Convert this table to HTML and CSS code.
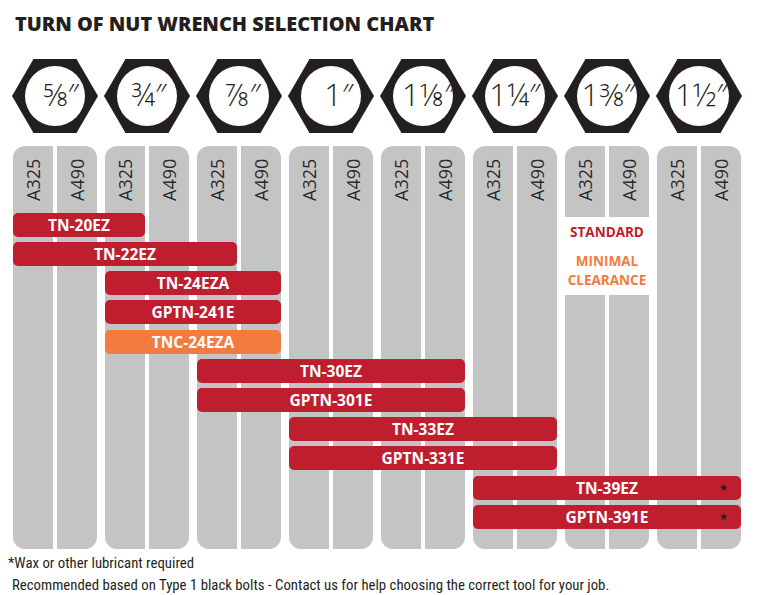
FILE: index.html
```html
<!DOCTYPE html>
<html lang="en">
<head>
<meta charset="utf-8">
<title>Turn of Nut Wrench Selection Chart</title>
<link rel="stylesheet" href="styles.css">
</head>
<body>
<h1 class="title">TURN OF NUT WRENCH SELECTION CHART</h1>

<div class="hexes">
  <div class="hex hx1"><svg class="nut" viewBox="0 0 86 74" width="86" height="74"><polygon points="0,37 21.5,0 64.5,0 86,37 64.5,74 21.5,74"/><circle cx="43" cy="37" r="30"/></svg><span class="size">⅝″</span></div>
  <div class="hex hx2"><svg class="nut" viewBox="0 0 86 74" width="86" height="74"><polygon points="0,37 21.5,0 64.5,0 86,37 64.5,74 21.5,74"/><circle cx="43" cy="37" r="30"/></svg><span class="size">¾″</span></div>
  <div class="hex hx3"><svg class="nut" viewBox="0 0 86 74" width="86" height="74"><polygon points="0,37 21.5,0 64.5,0 86,37 64.5,74 21.5,74"/><circle cx="43" cy="37" r="30"/></svg><span class="size">⅞″</span></div>
  <div class="hex hx4"><svg class="nut" viewBox="0 0 86 74" width="86" height="74"><polygon points="0,37 21.5,0 64.5,0 86,37 64.5,74 21.5,74"/><circle cx="43" cy="37" r="30"/></svg><span class="size">1″</span></div>
  <div class="hex hx5"><svg class="nut" viewBox="0 0 86 74" width="86" height="74"><polygon points="0,37 21.5,0 64.5,0 86,37 64.5,74 21.5,74"/><circle cx="43" cy="37" r="30"/></svg><span class="size">1⅛″</span></div>
  <div class="hex hx6"><svg class="nut" viewBox="0 0 86 74" width="86" height="74"><polygon points="0,37 21.5,0 64.5,0 86,37 64.5,74 21.5,74"/><circle cx="43" cy="37" r="30"/></svg><span class="size">1¼″</span></div>
  <div class="hex hx7"><svg class="nut" viewBox="0 0 86 74" width="86" height="74"><polygon points="0,37 21.5,0 64.5,0 86,37 64.5,74 21.5,74"/><circle cx="43" cy="37" r="30"/></svg><span class="size">1⅜″</span></div>
  <div class="hex hx8"><svg class="nut" viewBox="0 0 86 74" width="86" height="74"><polygon points="0,37 21.5,0 64.5,0 86,37 64.5,74 21.5,74"/><circle cx="43" cy="37" r="30"/></svg><span class="size">1½″</span></div>
</div>

<div class="chart">
  <div class="group g1"><div class="col"><span class="grade">A325</span></div><div class="col"><span class="grade">A490</span></div></div>
  <div class="group g2"><div class="col"><span class="grade">A325</span></div><div class="col"><span class="grade">A490</span></div></div>
  <div class="group g3"><div class="col"><span class="grade">A325</span></div><div class="col"><span class="grade">A490</span></div></div>
  <div class="group g4"><div class="col"><span class="grade">A325</span></div><div class="col"><span class="grade">A490</span></div></div>
  <div class="group g5"><div class="col"><span class="grade">A325</span></div><div class="col"><span class="grade">A490</span></div></div>
  <div class="group g6"><div class="col"><span class="grade">A325</span></div><div class="col"><span class="grade">A490</span></div></div>
  <div class="group g7"><div class="col"><span class="grade">A325</span></div><div class="col"><span class="grade">A490</span></div></div>
  <div class="group g8"><div class="col"><span class="grade">A325</span></div><div class="col"><span class="grade">A490</span></div></div>

  <div class="legend">
    <span class="legend-std">STANDARD</span>
    <span class="legend-min">MINIMAL<br>CLEARANCE</span>
  </div>

  <div class="bar r1 span-20"><span class="name">TN-20EZ</span></div>
  <div class="bar r2 span-22"><span class="name">TN-22EZ</span></div>
  <div class="bar r3 span-24"><span class="name">TN-24EZA</span></div>
  <div class="bar r4 span-24"><span class="name">GPTN-241E</span></div>
  <div class="bar r5 span-24 bar-orange"><span class="name">TNC-24EZA</span></div>
  <div class="bar r6 span-30"><span class="name">TN-30EZ</span></div>
  <div class="bar r7 span-30"><span class="name">GPTN-301E</span></div>
  <div class="bar r8 span-33"><span class="name">TN-33EZ</span></div>
  <div class="bar r9 span-33"><span class="name">GPTN-331E</span></div>
  <div class="bar r10 span-39"><span class="name">TN-39EZ</span><span class="star">★</span></div>
  <div class="bar r11 span-39"><span class="name">GPTN-391E</span><span class="star">★</span></div>
</div>

<div class="notes">
  <p class="note note-wax">*Wax or other lubricant required</p>
  <p class="note note-rec">Recommended based on Type 1 black bolts - Contact us for help choosing the correct tool for your job.</p>
</div>
</body>
</html>
```

FILE: styles.css
```css
* { box-sizing: border-box; }

body {
  margin: 0;
  background: #ffffff;
  color: #231f20;
  font-family: "Open Sans", "DejaVu Sans", sans-serif;
}

.title {
  margin: 0 0 0 15px;
  padding-top: 10px;
  font-size: 19.9px;
  line-height: 27px;
  font-weight: 800;
  color: #231f20;
  letter-spacing: 0;
}

/* hex nut row */
.hexes {
  display: flex;
  gap: 8px;
  margin: 22px 0 0 13px;
}

.hex {
  width: 84px;
  height: 74px;
  display: grid;
  place-items: center;
}

.nut {
  grid-area: 1 / 1;
  margin: 0 -1px;
  display: block;
}

.nut polygon { fill: #231f20; }
.nut circle { fill: #ffffff; }

.size {
  grid-area: 1 / 1;
  font-family: "Open Sans", "DejaVu Sans", sans-serif;
  font-weight: 300;
  font-size: 31px;
  line-height: 1;
  color: #231f20;
  margin-top: -3px;
  white-space: nowrap;
}

.hx1 .size { padding-left: 12px; }
.hx2 .size { padding-left: 4px; }
.hx3 .size { padding-left: 8px; }
.hx4 .size { padding-left: 16px; }
.hx5 .size { padding-left: 12px; }
.hx7 .size { padding-left: 3px; }
.hx8 .size { padding-left: 5px; }

/* chart grid */
.chart {
  display: grid;
  margin: 13px 0 0 13px;
  grid-template-columns: repeat(8, 40px 4px 40px 8px);
  grid-template-rows: 61.5px repeat(11, 24px) 14.5px;
  row-gap: 5.23px;
}

.group {
  grid-row: 1 / -1;
  display: flex;
  gap: 4px;
  border-radius: 12px;
  overflow: hidden;
}

.g1 { grid-column: 1 / 4; }
.g2 { grid-column: 5 / 8; }
.g3 { grid-column: 9 / 12; }
.g4 { grid-column: 13 / 16; }
.g5 { grid-column: 17 / 20; }
.g6 { grid-column: 21 / 24; }
.g7 { grid-column: 25 / 28; }
.g8 { grid-column: 29 / 32; }

.col {
  flex: 1;
  background: #c4c4c4;
}

.grade {
  display: flex;
  height: 67px;
  align-items: center;
  justify-content: center;
  writing-mode: vertical-rl;
  transform: rotate(180deg);
  font-size: 18px;
  line-height: 40px;
  font-weight: 400;
  color: #2b2b2b;
  width: 100%;
}

/* legend inside the 1 3/8 column */
.legend {
  grid-column: 25 / 28;
  grid-row: 2 / 5;
  margin-top: 4px;
  background: #ffffff;
  display: flex;
  flex-direction: column;
  align-items: center;
  padding-top: 6px;
  font-weight: 700;
  font-size: 13.5px;
  text-align: center;
}

.legend-std {
  color: #be1e2d;
  line-height: 19px;
}

.legend-min {
  color: #f37b3e;
  line-height: 19px;
  margin-top: 10px;
}

/* bars */
.bar {
  display: grid;
  grid-template-columns: 1fr auto 1fr;
  align-items: center;
  border-radius: 5px;
  background: #be1e2d;
  color: #ffffff;
  font-weight: 700;
  font-size: 15.5px;
  line-height: 24px;
}

.bar-orange { background: #f37b3e; }

.name { grid-column: 2; }

.star {
  grid-column: 3;
  justify-self: end;
  padding-right: 13px;
  color: #231f20;
  font-size: 10px;
  font-family: "DejaVu Sans", sans-serif;
}

.r1 { grid-row: 2; }
.r2 { grid-row: 3; }
.r3 { grid-row: 4; }
.r4 { grid-row: 5; }
.r5 { grid-row: 6; }
.r6 { grid-row: 7; }
.r7 { grid-row: 8; }
.r8 { grid-row: 9; }
.r9 { grid-row: 10; }
.r10 { grid-row: 11; }
.r11 { grid-row: 12; }

.span-20 { grid-column: 1 / 6; }
.span-22 { grid-column: 1 / 10; }
.span-24 { grid-column: 5 / 12; }
.span-30 { grid-column: 9 / 20; }
.span-33 { grid-column: 13 / 24; }
.span-39 { grid-column: 21 / 32; }

/* footnotes */
.notes {
  margin-top: 6px;
  font-family: "Roboto Condensed", "Liberation Sans Narrow", sans-serif;
  font-size: 14.8px;
  line-height: 16px;
  color: #231f20;
}

.note { margin: 0; }
.note-wax { margin-left: 8px; }
.note-rec { margin-left: 12px; margin-top: 6px; }
```
